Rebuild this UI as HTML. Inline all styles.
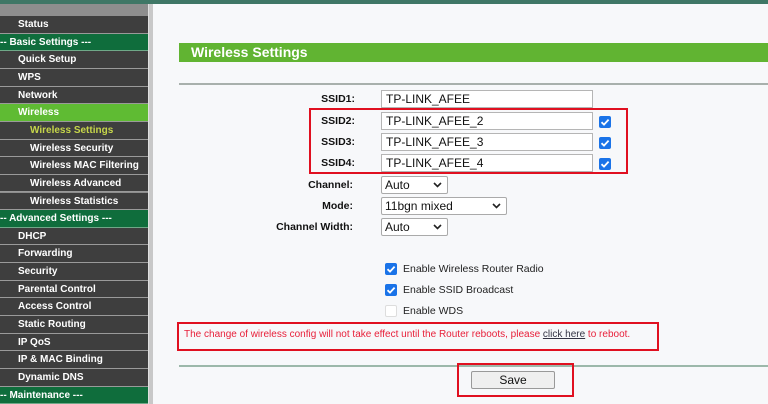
<!DOCTYPE html>
<html><head><meta charset="utf-8"><style>
*{margin:0;padding:0;box-sizing:border-box}
body{width:768px;height:404px;overflow:hidden;background:#f7f8fa;font-family:"Liberation Sans",Arial,sans-serif;position:relative}
.top{position:absolute;left:0;top:0;width:768px;height:4px;background:#3f7766}
.side{position:absolute;left:0;top:4px;width:148px;height:400px;background:#8e8e8e}
.bord{position:absolute;left:148px;top:4px;width:5px;height:400px;background:#c8c8c8;border-left:1px solid #e0e0e0}
.it{position:absolute;left:0;width:148px;height:17.65px;background:#3e3e3e;border-bottom:1px solid #9a9a9a;color:#fff;font-weight:bold;font-size:10px;line-height:18px;padding-left:18px;white-space:nowrap;overflow:hidden}
.it.sec{background:#0f6d3c;padding-left:0;border-bottom:1px solid #6fa888}
.it.sub{padding-left:30px}
.it.act{background:#5fbb33}
.it.cur{color:#c6d64a}
.hdr{position:absolute;left:179px;top:43px;width:589px;height:19px;background:#61b432;color:#fff;font-weight:bold;font-size:14px;line-height:19px;padding-left:12px}
.hl{position:absolute;left:179px;height:2px;background:#a8b0ac;width:589px}
.lbl{position:absolute;font-size:10.5px;font-weight:bold;color:#111;text-align:right;width:200px}
.inp{position:absolute;left:381px;width:212px;height:18px;border:1px solid #b5b5b5;background:#fff;font-size:12px;line-height:16px;padding-left:4px;color:#111}
.cb{position:absolute;width:12px;height:12px;background:#1a73e8;border-radius:2px}
.cb svg{position:absolute;left:0;top:0}
.cb.off{background:#fff;border:1px solid #ddd}
.sel{position:absolute;left:381px;height:18px;border:1px solid #aaa;border-radius:2px;background:#fff;font-size:12px;line-height:16px;padding-left:3px;color:#111}
.sel svg{position:absolute;right:5px;top:5px}
.opt{position:absolute;left:403px;font-size:10.5px;color:#222}
.red{position:absolute;border:2px solid #e01020}
</style></head><body>
<div class="top"></div>
<div class="side"></div>
<div class="bord"></div>

<div class="it" style="top:16px">Status</div>
<div class="it sec" style="top:33.65px">-- Basic Settings ---</div>
<div class="it" style="top:51.3px">Quick Setup</div>
<div class="it" style="top:68.95px">WPS</div>
<div class="it" style="top:86.6px">Network</div>
<div class="it act" style="top:104.25px">Wireless</div>
<div class="it sub cur" style="top:121.9px">Wireless Settings</div>
<div class="it sub" style="top:139.55px">Wireless Security</div>
<div class="it sub" style="top:157.2px">Wireless MAC Filtering</div>
<div class="it sub" style="top:174.85px">Wireless Advanced</div>
<div class="it sub" style="top:192.5px">Wireless Statistics</div>
<div class="it sec" style="top:210.15px">-- Advanced Settings ---</div>
<div class="it" style="top:227.8px">DHCP</div>
<div class="it" style="top:245.45px">Forwarding</div>
<div class="it" style="top:263.1px">Security</div>
<div class="it" style="top:280.75px">Parental Control</div>
<div class="it" style="top:298.4px">Access Control</div>
<div class="it" style="top:316.05px">Static Routing</div>
<div class="it" style="top:333.7px">IP QoS</div>
<div class="it" style="top:351.35px">IP &amp; MAC Binding</div>
<div class="it" style="top:369px">Dynamic DNS</div>
<div class="it sec" style="top:386.65px">-- Maintenance ---</div>

<div class="hdr">Wireless Settings</div>
<div class="hl" style="top:83px"></div>

<div class="lbl" style="left:155px;top:93px">SSID1:</div>
<div class="inp" style="top:90px">TP-LINK_AFEE</div>
<div class="lbl" style="left:155px;top:115px">SSID2:</div>
<div class="inp" style="top:112px">TP-LINK_AFEE_2</div>
<div class="lbl" style="left:155px;top:136px">SSID3:</div>
<div class="inp" style="top:133px">TP-LINK_AFEE_3</div>
<div class="lbl" style="left:155px;top:157px">SSID4:</div>
<div class="inp" style="top:154px">TP-LINK_AFEE_4</div>

<div class="cb" style="left:599px;top:116px"><svg width="12" height="12"><path d="M2.5 6.2 L5 8.6 L9.6 3.6" stroke="#fff" stroke-width="1.8" fill="none"/></svg></div>
<div class="cb" style="left:599px;top:137px"><svg width="12" height="12"><path d="M2.5 6.2 L5 8.6 L9.6 3.6" stroke="#fff" stroke-width="1.8" fill="none"/></svg></div>
<div class="cb" style="left:599px;top:158px"><svg width="12" height="12"><path d="M2.5 6.2 L5 8.6 L9.6 3.6" stroke="#fff" stroke-width="1.8" fill="none"/></svg></div>
<div class="red" style="left:309px;top:108px;width:319px;height:66px"></div>

<div class="lbl" style="left:153px;top:179px">Channel:</div>
<div class="sel" style="top:176px;width:67px">Auto<svg width="9" height="6"><path d="M1 1 L4.5 4.5 L8 1" stroke="#222" stroke-width="1.6" fill="none"/></svg></div>
<div class="lbl" style="left:153px;top:200px">Mode:</div>
<div class="sel" style="top:197px;width:126px">11bgn mixed<svg width="9" height="6"><path d="M1 1 L4.5 4.5 L8 1" stroke="#222" stroke-width="1.6" fill="none"/></svg></div>
<div class="lbl" style="left:153px;top:221px">Channel Width:</div>
<div class="sel" style="top:218px;width:67px">Auto<svg width="9" height="6"><path d="M1 1 L4.5 4.5 L8 1" stroke="#222" stroke-width="1.6" fill="none"/></svg></div>

<div class="cb" style="left:385px;top:263px"><svg width="12" height="12"><path d="M2.5 6.2 L5 8.6 L9.6 3.6" stroke="#fff" stroke-width="1.8" fill="none"/></svg></div>
<div class="opt" style="top:263px">Enable Wireless Router Radio</div>
<div class="cb" style="left:385px;top:284px"><svg width="12" height="12"><path d="M2.5 6.2 L5 8.6 L9.6 3.6" stroke="#fff" stroke-width="1.8" fill="none"/></svg></div>
<div class="opt" style="top:284px">Enable SSID Broadcast</div>
<div class="cb off" style="left:385px;top:305px"></div>
<div class="opt" style="top:305px">Enable WDS</div>

<div class="red" style="left:177px;top:322px;width:482px;height:29px"></div>
<div style="position:absolute;left:184px;top:329px;font-size:10px;color:#e8203a;white-space:nowrap">The change of wireless config will not take effect until the Router reboots, please <span style="color:#334;text-decoration:underline">click here</span> to reboot.</div>

<div class="hl" style="top:365px;background:#9cb8aa"></div>
<div style="position:absolute;left:471px;top:371px;width:84px;height:18px;background:#efefef;border:1px solid #999;border-radius:2px;font-size:12px;text-align:center;line-height:16px;color:#111">Save</div>
<div class="red" style="left:457px;top:363px;width:117px;height:34px"></div>
</body></html>
